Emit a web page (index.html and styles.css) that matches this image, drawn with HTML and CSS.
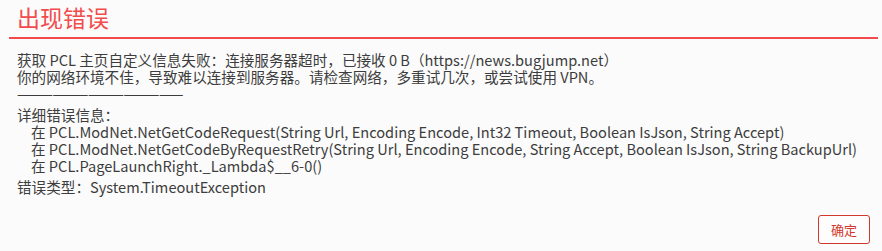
FILE: index.html
```html
<!DOCTYPE html>
<html lang="zh-CN">
<head>
<meta charset="utf-8">
<title>出现错误</title>
<link rel="stylesheet" href="styles.css">
</head>
<body>
<div class="dialog">
  <div class="title">出现错误</div>
  <div class="rule"></div>
  <div class="content">
    <div class="para">
      <div>获取 PCL 主页自定义信息失败：连接服务器超时，已接收 0 B（https://news.bugjump.net）</div>
      <div>你的网络环境不佳，导致难以连接到服务器。请检查网络，多重试几次，或尝试使用 VPN。</div>
      <div class="dashes">——————————————</div>
    </div>
    <div class="para gap">
      <div>详细错误信息：</div>
      <div class="indent">在 PCL.ModNet.NetGetCodeRequest(String Url, Encoding Encode, Int32 Timeout, Boolean IsJson, String Accept)</div>
      <div class="indent">在 PCL.ModNet.NetGetCodeByRequestRetry(String Url, Encoding Encode, String Accept, Boolean IsJson, String BackupUrl)</div>
      <div class="indent">在 PCL.PageLaunchRight._Lambda$__6-0()</div>
    </div>
    <div class="para gap">
      <div>错误类型：System.TimeoutException</div>
    </div>
  </div>
  <div class="actions">
    <button class="btn">确定</button>
  </div>
</div>
</body>
</html>
```
FILE: styles.css
```css
html, body {
  margin: 0;
  padding: 0;
  background: #fbfbfb;
}
body {
  width: 882px;
  height: 251px;
  overflow: hidden;
  font-family: "Noto Sans CJK SC", "Noto Sans", sans-serif;
}
.dialog {
  height: 251px;
  box-sizing: border-box;
  padding: 0 4px 0 9px;
  display: flex;
  flex-direction: column;
}
.title {
  padding-left: 8px;
  font-size: 23px;
  line-height: 34px;
  color: #f24c4c;
}
.rule {
  margin-top: 3px;
  height: 2px;
  background: #f44a4a;
}
.content {
  margin-top: 12px;
  padding-left: 8px;
  font-size: 14.6px;
  line-height: 17px;
  color: #3d3d3d;
  white-space: nowrap;
}
.dashes {
  letter-spacing: -0.4px;
}
.gap {
  margin-top: 4px;
}
.para .indent:first-of-type {
  margin-top: 1px;
}
.indent {
  padding-left: 14px;
}
.actions {
  margin-top: auto;
  display: flex;
  justify-content: flex-end;
  padding: 0 8px 7px 0;
}
.btn {
  width: 52px;
  height: 29px;
  box-sizing: border-box;
  border: 1px solid #d2372c;
  border-radius: 3px;
  background: #fdfdfd;
  color: #d2372c;
  font-family: "Noto Sans CJK SC", sans-serif;
  font-size: 13px;
  padding: 0;
}
```
